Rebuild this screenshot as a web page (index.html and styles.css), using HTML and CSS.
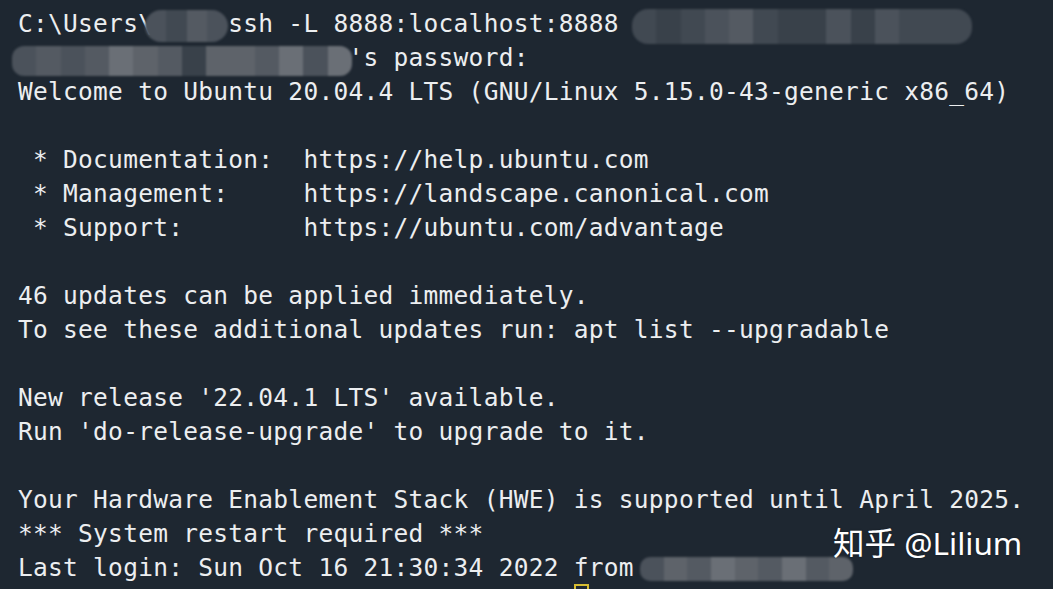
FILE: index.html
```html
<!DOCTYPE html>
<html>
<head>
<meta charset="utf-8">
<link rel="stylesheet" href="styles.css">
</head>
<body>
<div class="term">
<pre class="out">C:\Users\     ssh -L 8888:localhost:8888
                      's password:
Welcome to Ubuntu 20.04.4 LTS (GNU/Linux 5.15.0-43-generic x86_64)

 * Documentation:  https://help.ubuntu.com
 * Management:     https://landscape.canonical.com
 * Support:        https://ubuntu.com/advantage

46 updates can be applied immediately.
To see these additional updates run: apt list --upgradable

New release '22.04.1 LTS' available.
Run 'do-release-upgrade' to upgrade to it.

Your Hardware Enablement Stack (HWE) is supported until April 2025.
*** System restart required ***
Last login: Sun Oct 16 21:30:34 2022 from</pre>

  <div class="mask m-user">
    <span class="blk s3"></span><span class="blk s2"></span><span class="blk s4"></span><span class="blk s3"></span>
  </div>
  <div class="mask m-host">
    <span class="blk s2"></span><span class="blk s1"></span><span class="blk s2"></span><span class="blk s3"></span><span class="blk s4"></span><span class="blk s2"></span><span class="blk s1"></span><span class="blk s1"></span><span class="blk s3"></span><span class="blk s1"></span><span class="blk s3"></span><span class="blk s2"></span><span class="blk s2"></span><span class="blk s2"></span>
  </div>
  <div class="mask m-pass">
    <span class="blk s3"></span><span class="blk s4"></span><span class="blk s3"></span><span class="blk s4"></span><span class="blk s6"></span><span class="blk s5"></span><span class="blk s4"></span><span class="blk s1"></span><span class="blk s5"></span><span class="blk s5"></span><span class="blk s4"></span><span class="blk s6"></span><span class="blk s3"></span><span class="blk s6"></span>
  </div>
  <div class="mask m-from">
    <span class="blk s3"></span><span class="blk s5"></span><span class="blk s4"></span><span class="blk s6"></span><span class="blk s5"></span><span class="blk s4"></span><span class="blk s6"></span><span class="blk s4"></span><span class="blk s5"></span>
  </div>

  <div class="cursor"></div>
  <div class="watermark">知乎 @Lilium</div>
</div>
</body>
</html>
```
FILE: styles.css
```css
html, body {
  margin: 0;
  padding: 0;
  background: #1e2731;
}
body {
  width: 1053px;
  height: 589px;
  overflow: hidden;
}
.term {
  position: relative;
  width: 1053px;
  height: 589px;
  background: #1e2731;
  overflow: hidden;
}
.out {
  margin: 0;
  padding: 7px 0 0 18px;
  font-family: "DejaVu Sans Mono", "Liberation Mono", monospace;
  font-size: 24.5px;
  line-height: 34px;
  color: #eceef0;
  letter-spacing: 0.27px;
  white-space: pre;
}
.mask {
  position: absolute;
  display: flex;
  overflow: hidden;
  border-radius: 16px;
  filter: blur(1.2px);
}
.blk {
  flex: 1 1 0;
  height: 100%;
}
.s1 { background: #39414a; }
.s2 { background: #414952; }
.s3 { background: #4b525b; }
.s4 { background: #545a62; }
.s5 { background: #5e636a; }
.s6 { background: #6a6f76; }
.m-user {
  left: 145px;
  top: 10px;
  width: 83px;
  height: 32px;
}
.m-host {
  left: 632px;
  top: 9px;
  width: 340px;
  height: 35px;
}
.m-pass {
  left: 12px;
  top: 46px;
  width: 340px;
  height: 30px;
  border-radius: 12px;
}
.m-from {
  left: 640px;
  top: 557px;
  width: 213px;
  height: 24px;
  border-radius: 10px;
}
.cursor {
  position: absolute;
  left: 574px;
  top: 584px;
  width: 11px;
  height: 10px;
  border: 2px solid #d6bc32;
}
.watermark {
  position: absolute;
  left: 833px;
  top: 528px;
  font-family: "Noto Sans", "Noto Sans CJK SC", sans-serif;
  font-size: 31.5px;
  line-height: 30px;
  color: #ffffff;
  text-shadow: 0 0 2px rgba(0,0,0,0.4);
  white-space: nowrap;
}
```
